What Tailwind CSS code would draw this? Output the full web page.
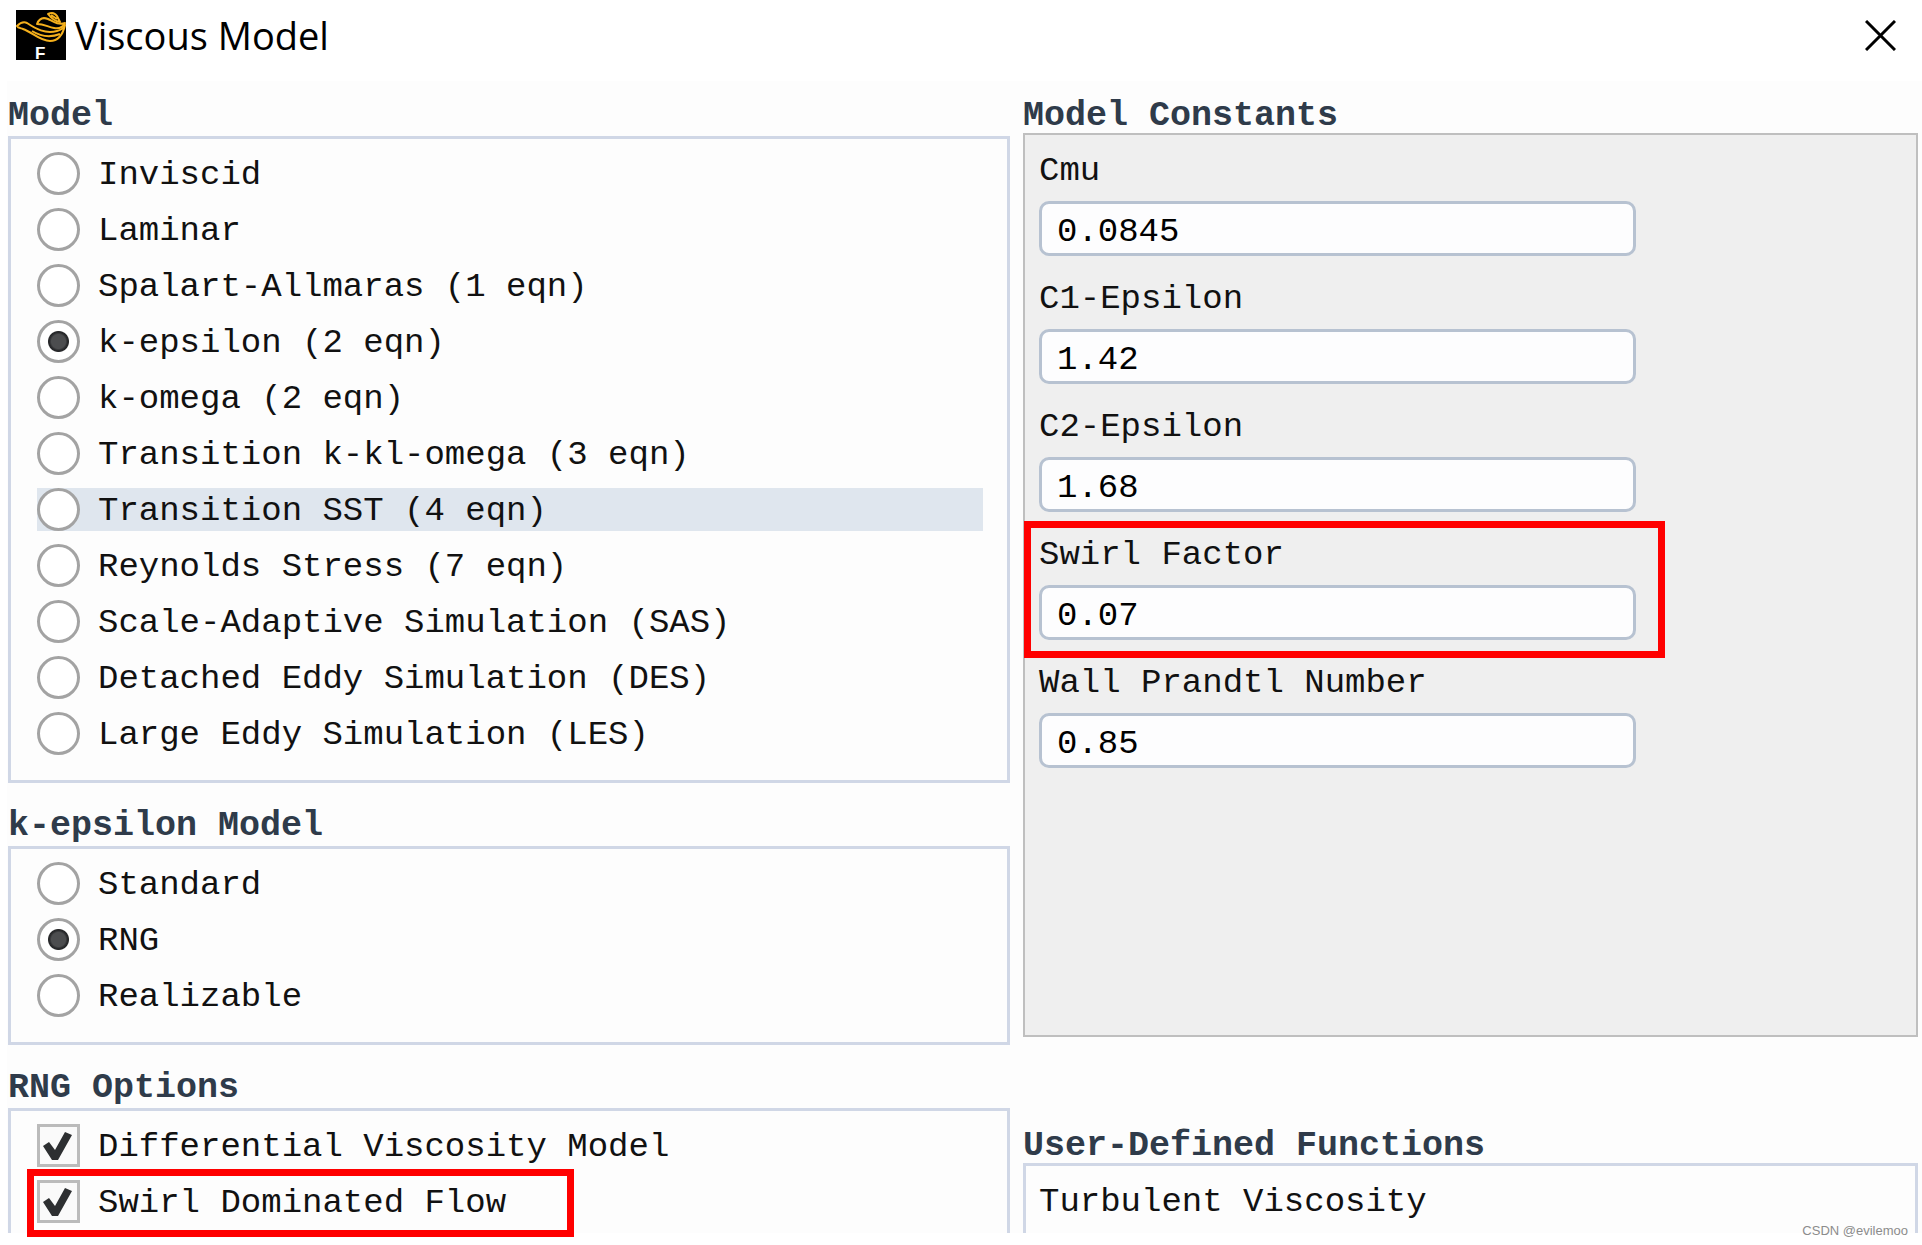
<!DOCTYPE html>
<html lang="en">
<head>
    <meta charset="UTF-8">
    <meta name="viewport" content="width=device-width, initial-scale=1.0">
    <title>Viscous Model</title>
    <script src="https://cdn.jsdelivr.net/npm/@tailwindcss/browser@4"></script>
</head>
<body class="relative flex min-h-screen flex-col bg-white pb-[14px] font-['Liberation_Mono',monospace] text-[34px] leading-[40px] text-[#111]">
    <!-- Title bar -->
    <header class="flex h-[81px] items-start justify-between pt-[10px] pr-[26px] pl-4">
        <div class="flex items-center gap-[9px]">
            <svg class="size-[50px] overflow-visible" viewBox="0 0 50 50" aria-hidden="true">
                <rect width="50" height="50" fill="#000"/>
                <g fill="none" stroke="#f5b01c" stroke-width="2" stroke-linejoin="round">
                    <path d="M1 16c3-3 6-5 10-3 9 6 18 11 30 8 4-1 7-3 8-6-2 9-6 16-15 16C24 31 16 22 7 19c-3-1-5-1-6-3z"/>
                    <path d="M21 14c2-5 6-7 11-5 6 3 10 6 17 4-2 4-6 6-11 5-6-1-10-4-17-4z"/>
                    <path d="M16 21c8 5 18 7 28 3"/>
                    <path d="M32 4c4-2 7-1 9 2l3 6c-6-1-9-4-12-8zM35 5l6 4"/>
                </g>
                <text x="19" y="49" font-family="Liberation Sans, sans-serif" font-size="17" font-weight="700" fill="#fff">F</text>
            </svg>
            <h1 class="font-['Open_Sans',sans-serif] text-[38px] leading-[48px] text-black">Viscous Model</h1>
        </div>
        <button type="button" aria-label="Close" class="mt-[10px]">
            <svg class="size-[31px]" viewBox="0 0 31 31" fill="none" stroke="#000" stroke-width="3"><path d="M1 1l29 29M30 1L1 30"/></svg>
        </button>
    </header>

    <main class="ml-[7px] grid flex-1 grid-cols-[1002fr_895fr] gap-x-[13px] bg-[#fdfdfd] pr-1 pl-px">
        <div class="flex flex-col">
            <h2 id="model" class="mt-[15px] text-[35px] font-bold text-[#2f3b4a]">Model</h2>
            <div role="radiogroup" aria-labelledby="model" class="flex flex-col gap-[13px] border-3 border-[#d0d7e6] pt-[13px] pr-6 pb-[25px] pl-[26px] [&_label]:flex [&_label]:h-[43px] [&_label]:items-start [&_label]:gap-[18px] [&_label]:leading-[47px] [&_input]:size-[43px] [&_input]:shrink-0 [&_input]:appearance-none [&_input]:rounded-full [&_input]:border-3 [&_input]:border-[#a3a3a3] [&_input]:bg-white [&_input]:checked:bg-[radial-gradient(circle,#4c4d4f_7px,#28292b_9px,#28292b_10px,white_11px)]">
                <label><input type="radio" name="model">Inviscid</label>
                <label><input type="radio" name="model">Laminar</label>
                <label><input type="radio" name="model">Spalart-Allmaras (1 eqn)</label>
                <label><input type="radio" name="model" checked>k-epsilon (2 eqn)</label>
                <label><input type="radio" name="model">k-omega (2 eqn)</label>
                <label><input type="radio" name="model">Transition k-kl-omega (3 eqn)</label>
                <label class="bg-[#dfe6ee]"><input type="radio" name="model">Transition SST (4 eqn)</label>
                <label><input type="radio" name="model">Reynolds Stress (7 eqn)</label>
                <label><input type="radio" name="model">Scale-Adaptive Simulation (SAS)</label>
                <label><input type="radio" name="model">Detached Eddy Simulation (DES)</label>
                <label><input type="radio" name="model">Large Eddy Simulation (LES)</label>
            </div>

            <h2 id="k-epsilon" class="mt-[23px] text-[35px] font-bold text-[#2f3b4a]">k-epsilon Model</h2>
            <div role="radiogroup" aria-labelledby="k-epsilon" class="flex flex-col gap-[13px] border-3 border-[#d0d7e6] pt-[13px] pr-6 pb-[25px] pl-[26px] [&_label]:flex [&_label]:h-[43px] [&_label]:items-start [&_label]:gap-[18px] [&_label]:leading-[47px] [&_input]:size-[43px] [&_input]:shrink-0 [&_input]:appearance-none [&_input]:rounded-full [&_input]:border-3 [&_input]:border-[#a3a3a3] [&_input]:bg-white [&_input]:checked:bg-[radial-gradient(circle,#4c4d4f_7px,#28292b_9px,#28292b_10px,white_11px)]">
                <label><input type="radio" name="k-epsilon">Standard</label>
                <label><input type="radio" name="k-epsilon" checked>RNG</label>
                <label><input type="radio" name="k-epsilon">Realizable</label>
            </div>

            <h2 id="rng" class="mt-[23px] text-[35px] font-bold text-[#2f3b4a]">RNG Options</h2>
            <div role="group" aria-labelledby="rng" class="flex flex-1 flex-col gap-[13px] border-3 border-b-0 border-[#d0d7e6] pt-[13px] pr-6 pb-[10px] pl-[26px]">
                <label class="flex h-[43px] items-start gap-[18px] leading-[47px]">
                    <span class="grid size-[43px] shrink-0">
                        <input type="checkbox" checked class="peer col-start-1 row-start-1 appearance-none border-3 border-[#bbb] bg-[#fafafa]">
                        <svg class="invisible col-start-1 row-start-1 size-[43px] peer-checked:visible" viewBox="0 0 43 43" fill="#2d2f31"><path d="M6 22l6-4 6 8L28 8l7 3-14 25h-6z"/></svg>
                    </span>
                    Differential Viscosity Model
                </label>
                <label class="relative flex h-[43px] items-start gap-[18px] leading-[47px]">
                    <span class="grid size-[43px] shrink-0">
                        <input type="checkbox" checked class="peer col-start-1 row-start-1 appearance-none border-3 border-[#bbb] bg-[#fafafa]">
                        <svg class="invisible col-start-1 row-start-1 size-[43px] peer-checked:visible" viewBox="0 0 43 43" fill="#2d2f31"><path d="M6 22l6-4 6 8L28 8l7 3-14 25h-6z"/></svg>
                    </span>
                    Swirl Dominated Flow
                    <span class="pointer-events-none absolute -top-[11px] -left-[10px] h-[68px] w-[547px] border-7 border-[#f00]"></span>
                </label>
            </div>
        </div>

        <div class="flex flex-col">
            <h2 class="mt-[19px] text-[35px] leading-[33px] font-bold text-[#2f3b4a]">Model Constants</h2>
            <div class="flex h-[904px] flex-col gap-[23px] border-2 border-[#bfbfbf] bg-[#efefef] px-[14px] pt-4 [&_input]:h-[55px] [&_input]:rounded-[10px] [&_input]:border-3 [&_input]:border-[#b7c2d1] [&_input]:bg-[#fdfdfe] [&_input]:px-[15px] [&_input]:pt-[7px] [&_input]:text-black [&>div]:flex [&>div]:w-[597px] [&>div]:flex-col [&>div]:gap-[10px]">
                <div>
                    <label for="cmu">Cmu</label>
                    <input id="cmu" type="text" value="0.0845">
                </div>
                <div>
                    <label for="c1">C1-Epsilon</label>
                    <input id="c1" type="text" value="1.42">
                </div>
                <div>
                    <label for="c2">C2-Epsilon</label>
                    <input id="c2" type="text" value="1.68">
                </div>
                <div class="relative">
                    <label for="swirl">Swirl Factor</label>
                    <input id="swirl" type="text" value="0.07">
                    <span class="pointer-events-none absolute -top-[14px] -right-[29px] -bottom-[18px] -left-[15px] border-7 border-[#f00]"></span>
                </div>
                <div>
                    <label for="prandtl">Wall Prandtl Number</label>
                    <input id="prandtl" type="text" value="0.85">
                </div>
            </div>

            <h2 class="mt-[93px] text-[35px] leading-[33px] font-bold text-[#2f3b4a]">User-Defined Functions</h2>
            <div class="flex-1 border-3 border-b-0 border-[#d0d7e6] px-[13px] pt-4">
                <p>Turbulent Viscosity</p>
            </div>
        </div>
    </main>

    <p class="absolute right-[14px] bottom-2 font-['Liberation_Sans',sans-serif] text-[13px] leading-4 text-[#8c8c8c]">CSDN @evilemoo</p>
</body>
</html>
